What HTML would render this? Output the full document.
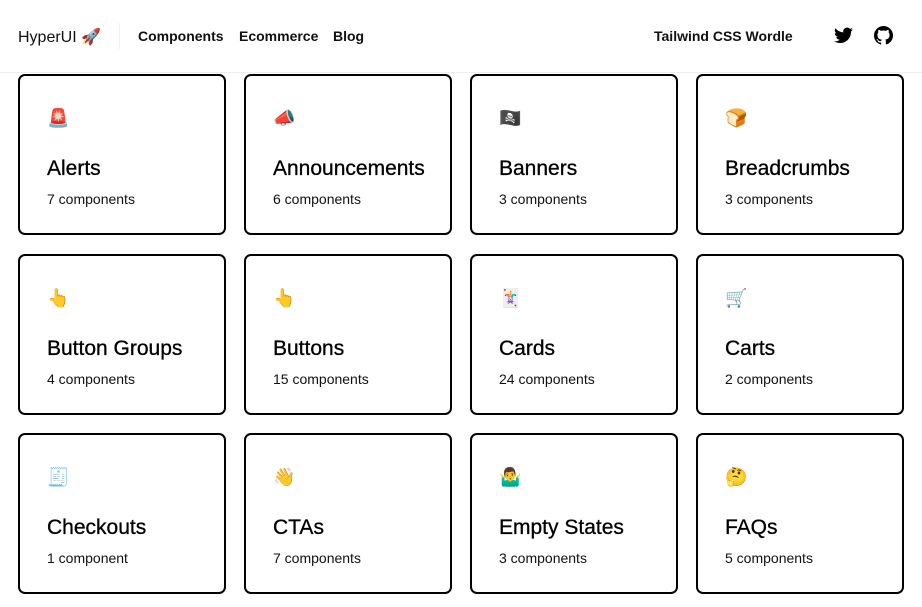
<!DOCTYPE html>
<html><head><meta charset="utf-8"><style>
*{box-sizing:border-box;margin:0;padding:0}
body{width:922px;height:607px;overflow:hidden;background:#fff;font-family:"Liberation Sans",sans-serif;color:#111;position:relative}
header{height:73px;border-bottom:1px solid #eee;position:relative}
.logo{position:absolute;left:18px;top:27px;font-size:16px}
.sep{position:absolute;left:119px;top:23px;width:1px;height:26px;background:#f0f0f0}
.nav{position:absolute;top:28px;font-size:14px;font-weight:bold}
.card{position:absolute;width:208px;height:161px;border:2px solid #000;border-radius:7px}
.card .e{position:absolute;left:27px;top:32px;font-size:18px;line-height:22px;font-family:"Noto Color Emoji","DejaVu Sans",sans-serif}
.card .t{position:absolute;left:27px;top:81px;font-size:21px;line-height:24px;color:#000;-webkit-text-stroke:0.3px #000}
.card .s{position:absolute;left:27px;top:115px;font-size:14px;line-height:16px}
</style></head><body>
<header>
<div class="logo">HyperUI 🚀</div>
<div class="sep"></div>
<div class="nav" style="left:138px">Components</div>
<div class="nav" style="left:239px">Ecommerce</div>
<div class="nav" style="left:333px">Blog</div>
<div class="nav" style="left:654px">Tailwind CSS Wordle</div>
<svg style="position:absolute;left:834px;top:27px" width="19" height="17" viewBox="0 0 24 20"><path fill="#000" d="M24 2.4a9.8 9.8 0 0 1-2.8.8A4.9 4.9 0 0 0 23.3.4a9.9 9.9 0 0 1-3.1 1.2A4.9 4.9 0 0 0 11.8 6 14 14 0 0 1 1.7.9a4.9 4.9 0 0 0 1.5 6.6A4.9 4.9 0 0 1 1 6.9 4.9 4.9 0 0 0 4.9 11.8a4.9 4.9 0 0 1-2.2.1 4.9 4.9 0 0 0 4.6 3.4A9.9 9.9 0 0 1 0 17.3 14 14 0 0 0 7.5 19.5c9.1 0 14-7.5 14-14v-.6A10 10 0 0 0 24 2.4z"/></svg>
<svg style="position:absolute;left:874px;top:26px" width="19" height="19" viewBox="0 0 16 16"><path fill="#000" d="M8 0C3.6 0 0 3.6 0 8c0 3.5 2.3 6.5 5.5 7.6.4.1.5-.2.5-.4v-1.4c-2.2.5-2.7-1-2.7-1-.4-.9-.9-1.200-.9-1.2-.7-.5.1-.5.1-.5.8.1 1.2.8 1.2.8.7 1.2 1.9.9 2.3.7.1-.5.3-.9.5-1.1-1.8-.2-3.6-.9-3.6-4 0-.9.3-1.6.8-2.1-.1-.2-.4-1 .1-2.1 0 0 .7-.2 2.2.8.6-.2 1.3-.3 2-.3s1.4.1 2 .3c1.5-1 2.2-.8 2.2-.8.4 1.1.2 1.9.1 2.1.5.6.8 1.3.8 2.1 0 3.1-1.9 3.700-3.6 3.9.3.3.5.8.5 1.5v2.2c0 .2.1.5.6.4C13.7 14.5 16 11.5 16 8c0-4.4-3.6-8-8-8z"/></svg>
</header>
<div class="card" style="left:18px;top:74px"><div class="e">🚨</div><div class="t">Alerts</div><div class="s">7 components</div></div>
<div class="card" style="left:244px;top:74px"><div class="e">📣</div><div class="t">Announcements</div><div class="s">6 components</div></div>
<div class="card" style="left:470px;top:74px"><div class="e">🏴‍☠️</div><div class="t">Banners</div><div class="s">3 components</div></div>
<div class="card" style="left:696px;top:74px"><div class="e">🍞</div><div class="t">Breadcrumbs</div><div class="s">3 components</div></div>
<div class="card" style="left:18px;top:254px"><div class="e">👆</div><div class="t">Button Groups</div><div class="s">4 components</div></div>
<div class="card" style="left:244px;top:254px"><div class="e">👆</div><div class="t">Buttons</div><div class="s">15 components</div></div>
<div class="card" style="left:470px;top:254px"><div class="e">🃏</div><div class="t">Cards</div><div class="s">24 components</div></div>
<div class="card" style="left:696px;top:254px"><div class="e">🛒</div><div class="t">Carts</div><div class="s">2 components</div></div>
<div class="card" style="left:18px;top:433px"><div class="e">🧾</div><div class="t">Checkouts</div><div class="s">1 component</div></div>
<div class="card" style="left:244px;top:433px"><div class="e">👋</div><div class="t">CTAs</div><div class="s">7 components</div></div>
<div class="card" style="left:470px;top:433px"><div class="e">🤷‍♂️</div><div class="t">Empty States</div><div class="s">3 components</div></div>
<div class="card" style="left:696px;top:433px"><div class="e">🤔</div><div class="t">FAQs</div><div class="s">5 components</div></div>
</body></html>
